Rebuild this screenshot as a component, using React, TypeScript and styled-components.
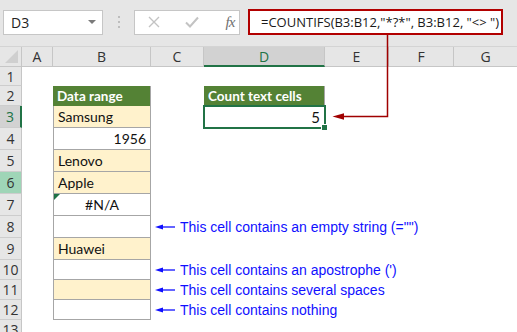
import styled, { createGlobalStyle, css } from "styled-components";

const GlobalStyle = createGlobalStyle`
  html, body {
    margin: 0;
    padding: 0;
    background: #ffffff;
  }
  body {
    font-family: "Lato", "Noto Sans", sans-serif;
  }
`;

type Tone = "yellow" | "white";
type Align = "left" | "right" | "center";

interface DataCellInfo {
  text?: string;
  tone: Tone;
  align?: Align;
  flag?: boolean;
}

interface SheetRow {
  n: number;
  h: number;
  head?: "selected" | "marked";
  b?: DataCellInfo | "header";
  d?: "header" | "result";
  note?: string;
}

const LETTERS = ["A", "B", "C", "D", "E", "F", "G"];

const ROWS: SheetRow[] = [
  { n: 1, h: 19 },
  { n: 2, h: 20, b: "header", d: "header" },
  { n: 3, h: 22, head: "selected", b: { text: "Samsung", tone: "yellow" }, d: "result" },
  { n: 4, h: 22, b: { text: "1956", tone: "white", align: "right" } },
  { n: 5, h: 22, b: { text: "Lenovo", tone: "yellow" } },
  { n: 6, h: 22, head: "marked", b: { text: "Apple", tone: "yellow" } },
  { n: 7, h: 22, b: { text: "#N/A", tone: "white", align: "center", flag: true } },
  { n: 8, h: 22, b: { tone: "white" }, note: 'This cell contains an empty string (="")' },
  { n: 9, h: 22, b: { text: "Huawei", tone: "yellow" } },
  { n: 10, h: 20, b: { tone: "white" }, note: "This cell contains an apostrophe (')" },
  { n: 11, h: 20, b: { tone: "yellow" }, note: "This cell contains several spaces" },
  { n: 12, h: 20, b: { tone: "white" }, note: "This cell contains nothing" },
  { n: 13, h: 20 },
];

const GREEN = "#217346";

const Window = styled.div`
  position: relative;
  width: 517px;
  height: 332px;
  overflow: hidden;
  background: #ffffff;
`;

const FormulaBar = styled.div`
  display: flex;
  align-items: center;
  height: 47px;
  padding: 0 0 2px 3px;
  box-sizing: border-box;
  background: #e6e6e6;
  border-bottom: 1px solid #d4d4d4;
`;

const NameBox = styled.div`
  display: flex;
  align-items: center;
  justify-content: space-between;
  width: 100px;
  height: 25px;
  box-sizing: border-box;
  padding: 0 6px 0 7px;
  background: #ffffff;
  border: 1px solid #c6c6c6;
  font-family: "Open Sans", "Noto Sans", sans-serif;
  font-size: 14px;
  color: #222222;
`;

const Caret = styled.span`
  width: 0;
  height: 0;
  border-left: 4px solid transparent;
  border-right: 4px solid transparent;
  border-top: 4px solid #7a7a7a;
`;

const Grip = styled.div`
  display: flex;
  flex-direction: column;
  align-items: center;
  gap: 3px;
  width: 31px;
`;

const GripDot = styled.span`
  width: 2px;
  height: 2px;
  background: #bdbdbd;
`;

const ButtonBox = styled.div`
  display: flex;
  align-items: center;
  gap: 24px;
  width: 106px;
  height: 25px;
  box-sizing: border-box;
  padding-left: 12px;
  background: #ffffff;
  border: 1px solid #c6c6c6;
`;

const BarIcon = styled.span`
  display: flex;
  align-items: center;
  justify-content: center;
  width: 14px;
  height: 14px;
`;

const Fx = styled.span`
  width: 14px;
  font-family: "Liberation Serif", serif;
  font-style: italic;
  font-size: 15px;
  color: #6f6f6f;
  letter-spacing: -1px;
  text-align: center;
`;

const FormulaBox = styled.div`
  display: flex;
  align-items: center;
  width: 255px;
  height: 26px;
  margin-left: 8px;
  box-sizing: border-box;
  padding-left: 11px;
  background: #ffffff;
  border: 2px solid #b20000;
  font-family: "Open Sans", "Noto Sans", sans-serif;
  font-size: 13px;
  color: #1a1a1a;
  white-space: nowrap;
  overflow: hidden;
`;

const Sheet = styled.div<{ $rows: string }>`
  display: grid;
  grid-template-columns: 22px 31px 98px 53px 121px 64px 65px 64px;
  grid-template-rows: 20px ${(p) => p.$rows};
  font-family: "Lato", "Noto Sans", sans-serif;
`;

const Corner = styled.div`
  position: relative;
  background: #e6e6e6;
  border-right: 1px solid #c6c6c6;
  border-bottom: 1px solid #c6c6c6;

  &::after {
    content: "";
    position: absolute;
    right: 3px;
    bottom: 3px;
    width: 0;
    height: 0;
    border-left: 13px solid transparent;
    border-bottom: 13px solid #cfcfcf;
  }
`;

const ColHead = styled.div<{ $selected?: boolean }>`
  display: flex;
  align-items: center;
  justify-content: center;
  box-sizing: border-box;
  background: ${(p) => (p.$selected ? "#d2d2d2" : "#e6e6e6")};
  border-right: 1px solid #c6c6c6;
  border-bottom: ${(p) => (p.$selected ? `2px solid ${GREEN}` : "1px solid #c6c6c6")};
  font-family: "Open Sans", "Noto Sans", sans-serif;
  font-size: 14px;
  color: ${(p) => (p.$selected ? GREEN : "#333333")};
`;

const RowHead = styled.div<{ $state?: "selected" | "marked" }>`
  display: flex;
  align-items: center;
  justify-content: center;
  box-sizing: border-box;
  background: #e6e6e6;
  border-right: 1px solid #c6c6c6;
  border-bottom: 1px solid #cdcdcd;
  font-family: "Open Sans", "Noto Sans", sans-serif;
  font-size: 14px;
  color: #333333;

  ${(p) =>
    p.$state === "selected" &&
    css`
      background: #d2d2d2;
      border-right: 2px solid ${GREEN};
      color: ${GREEN};
    `}
  ${(p) =>
    p.$state === "marked" &&
    css`
      background: #9fd5b7;
    `}
`;

const Blank = styled.div``;

const HeaderCell = styled.div`
  display: flex;
  align-items: center;
  box-sizing: border-box;
  padding: 0 4px;
  background: #548235;
  border-right: 1px solid #a6a6a6;
  color: #ffffff;
  font-weight: 700;
  font-size: 13.5px;
  white-space: nowrap;
`;

const DataCell = styled.div<{ $tone: Tone; $align: Align }>`
  position: relative;
  display: flex;
  align-items: flex-end;
  justify-content: ${(p) =>
    p.$align === "right" ? "flex-end" : p.$align === "center" ? "center" : "flex-start"};
  box-sizing: border-box;
  padding: 0 4px 1px;
  background: ${(p) => (p.$tone === "yellow" ? "#fff2cc" : "#ffffff")};
  border-left: 1px solid #a6a6a6;
  border-right: 1px solid #a6a6a6;
  border-bottom: 1px solid #a6a6a6;
  font-size: 14px;
  line-height: 19px;
  color: #111111;
`;

const ErrorFlag = styled.span`
  position: absolute;
  top: 0;
  left: 0;
  width: 0;
  height: 0;
  border-top: 6px solid #1e7145;
  border-right: 6px solid transparent;
`;

const ResultCell = styled.div`
  position: relative;
  display: flex;
  align-items: flex-end;
  justify-content: flex-end;
  box-sizing: border-box;
  padding: 0 5px 1px;
  outline: 2px solid ${GREEN};
  outline-offset: -1px;
  font-size: 15px;
  line-height: 19px;
  color: #111111;

  &::after {
    content: "";
    position: absolute;
    right: -3px;
    bottom: -3px;
    width: 5px;
    height: 5px;
    background: ${GREEN};
    border: 1px solid #ffffff;
  }
`;

const Note = styled.div`
  grid-column: span 5;
  display: flex;
  align-items: center;
  gap: 5px;
  padding-left: 4px;
  font-family: "Liberation Sans", Arial, sans-serif;
  font-size: 14px;
  color: #1010ff;
  white-space: nowrap;
`;

const Overlay = styled.svg`
  position: absolute;
  top: 0;
  left: 0;
  pointer-events: none;
`;

const NoteArrow = () => (
  <svg width="20" height="8" viewBox="0 0 20 8">
    <line x1="5" y1="4" x2="20" y2="4" stroke="#1010ff" strokeWidth="1.3" />
    <polygon points="0,4 8,1.6 8,6.4" fill="#1010ff" />
  </svg>
);

const renderB = (b: SheetRow["b"], key: string) => {
  if (!b) return <Blank key={key} />;
  if (b === "header") return <HeaderCell key={key}>Data range</HeaderCell>;
  return (
    <DataCell key={key} $tone={b.tone} $align={b.align ?? "left"}>
      {b.flag && <ErrorFlag />}
      {b.text}
    </DataCell>
  );
};

const renderD = (d: SheetRow["d"], key: string) => {
  if (d === "header") return <HeaderCell key={key}>Count text cells</HeaderCell>;
  if (d === "result") return <ResultCell key={key}>5</ResultCell>;
  return <Blank key={key} />;
};

export default function App() {
  return (
    <Window>
      <GlobalStyle />
      <FormulaBar>
        <NameBox>
          D3
          <Caret />
        </NameBox>
        <Grip>
          <GripDot />
          <GripDot />
          <GripDot />
        </Grip>
        <ButtonBox>
          <BarIcon>
            <svg width="12" height="12" viewBox="0 0 12 12">
              <path d="M1 1 L11 11 M11 1 L1 11" stroke="#c3c3c3" strokeWidth="1.4" />
            </svg>
          </BarIcon>
          <BarIcon>
            <svg width="14" height="12" viewBox="0 0 14 12">
              <path d="M1 6.5 L5 10.5 L13 1.5" stroke="#c3c3c3" strokeWidth="2" fill="none" />
            </svg>
          </BarIcon>
          <Fx>fx</Fx>
        </ButtonBox>
        <FormulaBox>=COUNTIFS(B3:B12,"*?*", B3:B12, "&lt;&gt; ")</FormulaBox>
      </FormulaBar>

      <Sheet $rows={ROWS.map((r) => `${r.h}px`).join(" ")}>
        <Corner />
        {LETTERS.map((l) => (
          <ColHead key={l} $selected={l === "D"}>
            {l}
          </ColHead>
        ))}
        {ROWS.map((r) => [
          <RowHead key={`h${r.n}`} $state={r.head}>
            {r.n}
          </RowHead>,
          <Blank key={`a${r.n}`} />,
          renderB(r.b, `b${r.n}`),
          ...(r.note
            ? [
                <Note key={`n${r.n}`}>
                  <NoteArrow />
                  {r.note}
                </Note>,
              ]
            : [
                <Blank key={`c${r.n}`} />,
                renderD(r.d, `d${r.n}`),
                <Blank key={`e${r.n}`} />,
                <Blank key={`f${r.n}`} />,
                <Blank key={`g${r.n}`} />,
              ]),
        ])}
      </Sheet>

      <Overlay width="517" height="332" viewBox="0 0 517 332">
        <path d="M387.5 35 V116.5 H341" stroke="#a00000" strokeWidth="1.5" fill="none" />
        <polygon points="332.5,116.5 344,113.2 344,119.8" fill="#a00000" />
      </Overlay>
    </Window>
  );
}
